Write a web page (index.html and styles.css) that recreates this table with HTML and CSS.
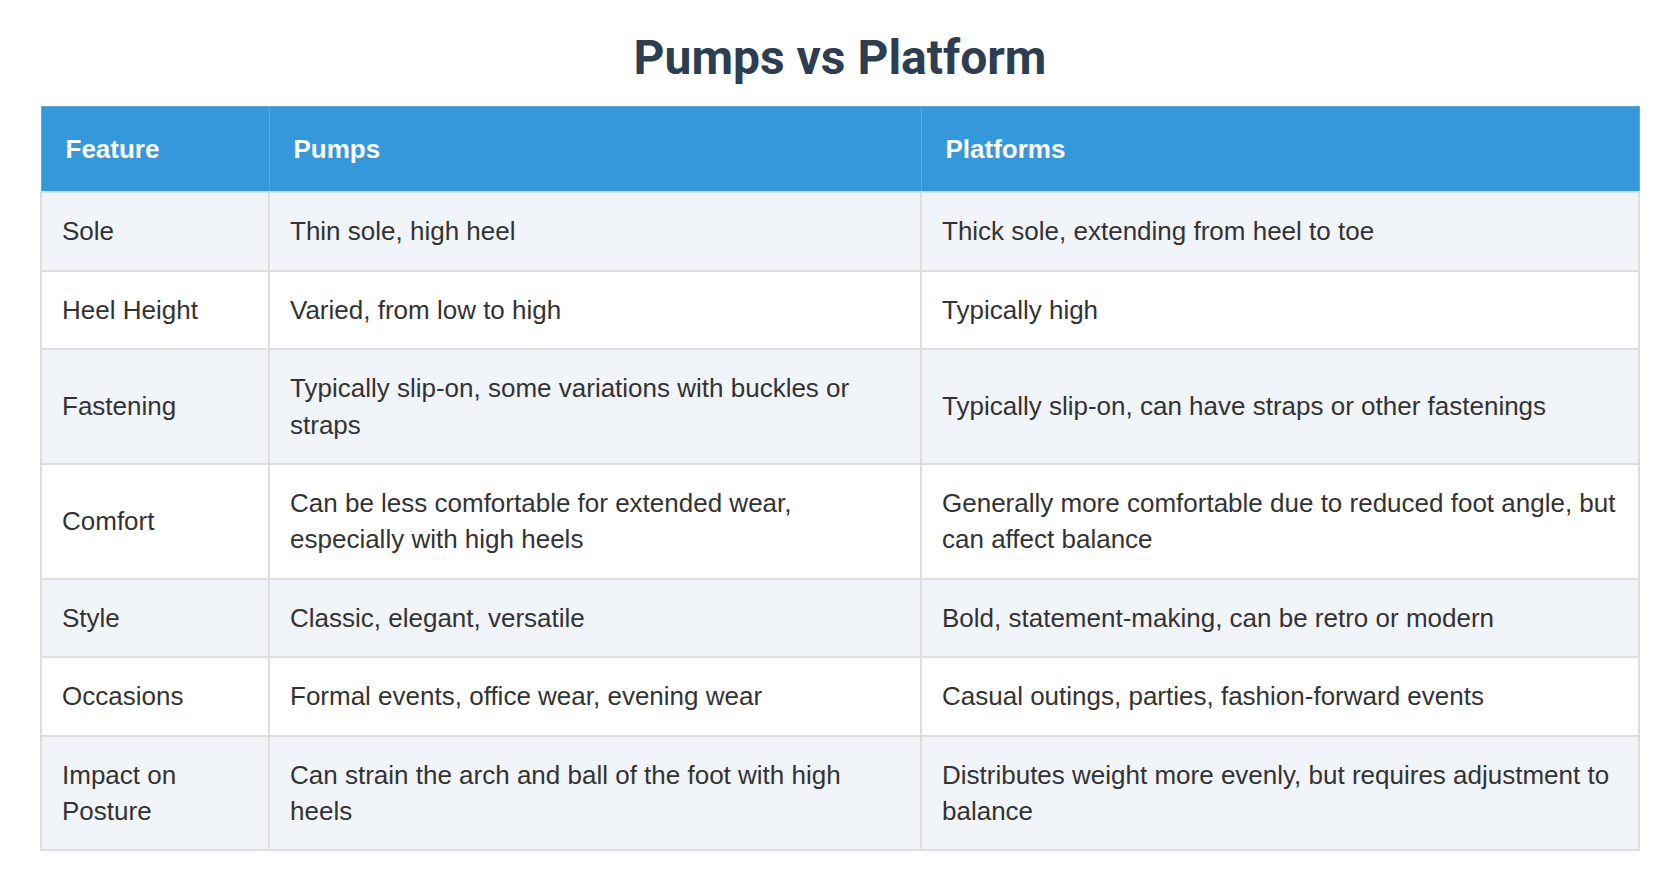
FILE: index.html
```html
<!DOCTYPE html>
<html lang="en">
<head>
<meta charset="utf-8">
<title>Pumps vs Platform</title>
<link rel="stylesheet" href="styles.css">
</head>
<body>
<div class="page">
  <h1 class="title">Pumps vs Platform</h1>
  <table class="compare">
    <colgroup>
      <col class="c1"><col class="c2"><col class="c3">
    </colgroup>
    <thead>
      <tr><th>Feature</th><th>Pumps</th><th>Platforms</th></tr>
    </thead>
    <tbody>
      <tr><td>Sole</td><td>Thin sole, high heel</td><td>Thick sole, extending from heel to toe</td></tr>
      <tr><td>Heel Height</td><td>Varied, from low to high</td><td>Typically high</td></tr>
      <tr><td>Fastening</td><td>Typically slip-on, some variations with buckles or straps</td><td>Typically slip-on, can have straps or other fastenings</td></tr>
      <tr><td>Comfort</td><td>Can be less comfortable for extended wear, especially with high heels</td><td>Generally more comfortable due to reduced foot angle, but can affect balance</td></tr>
      <tr><td>Style</td><td>Classic, elegant, versatile</td><td>Bold, statement-making, can be retro or modern</td></tr>
      <tr><td>Occasions</td><td>Formal events, office wear, evening wear</td><td>Casual outings, parties, fashion-forward events</td></tr>
      <tr><td>Impact on Posture</td><td>Can strain the arch and ball of the foot with high heels</td><td>Distributes weight more evenly, but requires adjustment to balance</td></tr>
    </tbody>
  </table>
</div>
</body>
</html>
```
FILE: styles.css
```css
html, body {
  margin: 0;
  padding: 0;
  background: #ffffff;
}
.page {
  padding: 30px 40px 40px;
  font-family: "Liberation Sans", Arial, sans-serif;
  color: #333333;
}
.title {
  margin: 0 0 20px;
  font-family: Roboto, "Liberation Sans", sans-serif;
  font-weight: 700;
  font-size: 48px;
  line-height: 56px;
  text-align: center;
  color: #2c3e50;
}
.compare {
  width: 1598px;
  border-collapse: collapse;
  table-layout: fixed;
  font-size: 26px;
  line-height: 1.4;
}
.c1 { width: 228px; }
.c2 { width: 652px; }
.c3 { width: 718px; }
.compare th {
  background: #3498db;
  color: #ffffff;
  font-weight: 700;
  text-align: left;
  padding: 24px 24px;
  border: 1px solid #5aa9e2;
}
.compare td {
  padding: 20px;
  border: 2px solid #dedede;
  vertical-align: middle;
}
.compare tbody tr:nth-child(odd) td {
  background: #f1f4f9;
}
.compare tbody tr:nth-child(even) td {
  background: #ffffff;
}
```
